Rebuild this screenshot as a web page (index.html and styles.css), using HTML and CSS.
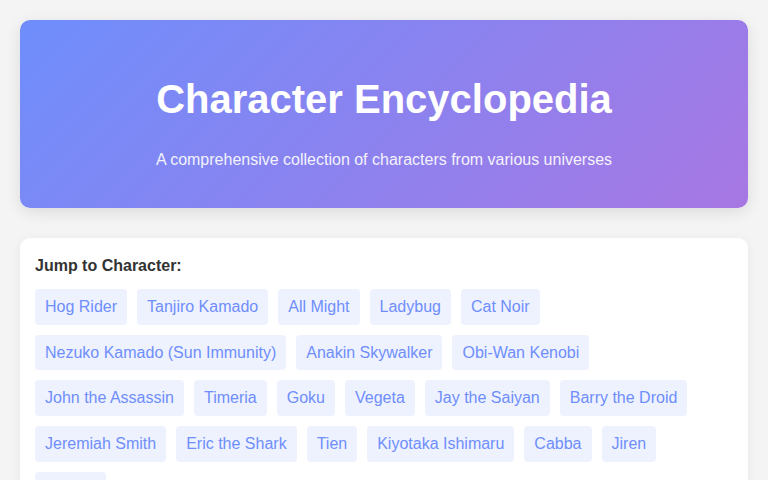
FILE: index.html
```html
<!DOCTYPE html>
<html lang="en">
<head>
<meta charset="utf-8">
<title>Character Encyclopedia</title>
<link rel="stylesheet" href="styles.css">
</head>
<body>
<div class="container">
  <header class="hero">
    <h1 class="hero-title">Character Encyclopedia</h1>
    <p class="hero-sub">A comprehensive collection of characters from various universes</p>
  </header>
  <nav class="jump">
    <div class="jump-title">Jump to Character:</div>
    <div class="jump-list">
      <a class="tag" href="#">Hog Rider</a>
      <a class="tag" href="#">Tanjiro Kamado</a>
      <a class="tag" href="#">All Might</a>
      <a class="tag" href="#">Ladybug</a>
      <a class="tag" href="#">Cat Noir</a>
      <a class="tag" href="#">Nezuko Kamado (Sun Immunity)</a>
      <a class="tag" href="#">Anakin Skywalker</a>
      <a class="tag" href="#">Obi-Wan Kenobi</a>
      <a class="tag" href="#">John the Assassin</a>
      <a class="tag" href="#">Timeria</a>
      <a class="tag" href="#">Goku</a>
      <a class="tag" href="#">Vegeta</a>
      <a class="tag" href="#">Jay the Saiyan</a>
      <a class="tag" href="#">Barry the Droid</a>
      <a class="tag" href="#">Jeremiah Smith</a>
      <a class="tag" href="#">Eric the Shark</a>
      <a class="tag" href="#">Tien</a>
      <a class="tag" href="#">Kiyotaka Ishimaru</a>
      <a class="tag" href="#">Cabba</a>
      <a class="tag" href="#">Jiren</a>
      <a class="tag" href="#">Beerus</a>
    </div>
  </nav>
</div>
</body>
</html>
```

FILE: styles.css
```css
* { box-sizing: border-box; }
html, body { margin: 0; padding: 0; }
body {
  background: #f4f4f4;
  font-family: "Liberation Sans", Arial, sans-serif;
  font-size: 16px;
  line-height: 1.6;
  color: #333;
}
.container {
  padding: 20px;
}
.hero {
  background: linear-gradient(135deg, #6e8efb 0%, #a777e3 100%);
  color: #fff;
  text-align: center;
  border-radius: 10px;
  padding: 36px 20px 35px;
  box-shadow: 0 4px 15px rgba(0, 0, 0, 0.1);
  margin-bottom: 30px;
}
.hero-title {
  font-size: 40px;
  font-weight: bold;
  line-height: 1.6;
  margin: 11px 0 16px;
}
.hero-sub {
  margin: 0;
  font-size: 16px;
  opacity: 0.9;
}
.jump {
  background: #fff;
  border-radius: 10px;
  padding: 15px;
  box-shadow: 0 2px 10px rgba(0, 0, 0, 0.06);
}
.jump-title {
  font-weight: bold;
  color: #333;
  margin-bottom: 11px;
}
.jump-list {
  display: flex;
  flex-wrap: wrap;
  gap: 10px;
}
.tag {
  display: block;
  padding: 5px 10px;
  background: #eef2ff;
  color: #6e8efb;
  text-decoration: none;
  border-radius: 4px;
}
```
